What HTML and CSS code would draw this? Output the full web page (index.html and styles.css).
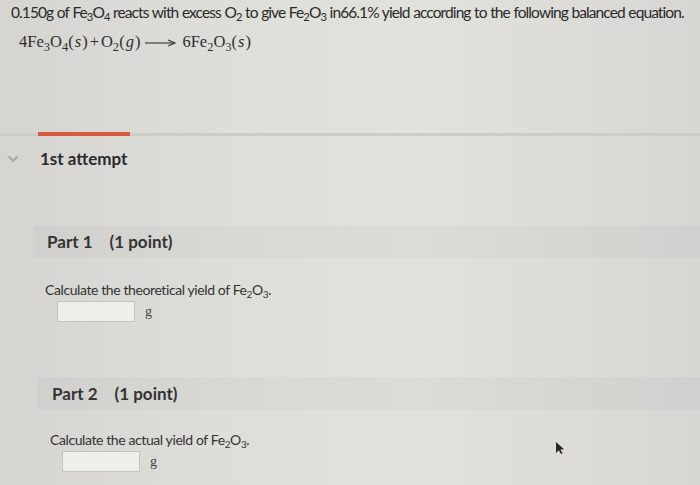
FILE: index.html
```html
<!DOCTYPE html>
<html lang="en">
<head>
  <meta charset="UTF-8" />
  <meta name="viewport" content="width=device-width, initial-scale=1.0" />
  <title>Theoretical yield</title>
  <link rel="stylesheet" href="styles.css">
</head>
<body>
  <div class="question">
    <p class="question-text">0.150g of Fe<sub>3</sub>O<sub>4</sub> reacts with excess O<sub>2</sub> to give Fe<sub>2</sub>O<sub>3</sub> in66.1% yield according to the following balanced equation.</p>
    <div class="equation">4Fe<sub>3</sub>O<sub>4</sub>(<i>s</i>)<span class="op">+</span>O<sub>2</sub>(<i>g</i>)<svg class="arrow" width="31" height="10" viewBox="0 0 31 10">
        <line x1="0" y1="5" x2="28" y2="5" stroke="#333" stroke-width="1.1" />
        <path d="M23 2 L30 5 L23 8" fill="none" stroke="#333" stroke-width="1.1" />
      </svg>6Fe<sub>2</sub>O<sub>3</sub>(<i>s</i>)</div>
  </div>

  <div class="progress">
    <div class="progress-fill"></div>
  </div>

  <div class="attempt-head">
    <svg class="chevron" width="12" height="8" viewBox="0 0 12 8">
      <path d="M1.5 1.5 L6 6 L10.5 1.5" fill="none" stroke="#a8a8a6" stroke-width="2.2" />
    </svg>
    <span>1st attempt</span>
  </div>

  <div class="part">
    <div class="part-head"><span class="part-name">Part 1</span>(1 point)</div>
    <div class="part-body">
      <p class="prompt">Calculate the theoretical yield of Fe<sub>2</sub>O<sub>3</sub>.</p>
      <div class="answer">
        <span class="answer-box"></span>
        <span class="unit">g</span>
      </div>
    </div>
  </div>

  <div class="part part-second">
    <div class="part-head"><span class="part-name">Part 2</span>(1 point)</div>
    <div class="part-body">
      <p class="prompt">Calculate the actual yield of Fe<sub>2</sub>O<sub>3</sub>.</p>
      <div class="answer">
        <span class="answer-box"></span>
        <span class="unit">g</span>
      </div>
    </div>
  </div>

  <!-- mouse pointer caught in the shot -->
  <svg class="pointer" width="10" height="14" viewBox="0 0 10 14">
    <path d="M1 1 L1 12 L3.8 9.2 L6 13 L7.6 12.2 L5.4 8.4 L9 8.2 Z" fill="#2b2524" />
  </svg>
</body>
</html>
```

FILE: styles.css
```css
body {
  margin: 0;
  min-height: 485px;
  font-family: Lato, "Open Sans", sans-serif;
  color: #2a2a2a;
  background: linear-gradient(to right, #d5d4d1 0%, #dfdfda 35%, #e2e2dc 60%, #d8d6d3 100%);
  position: relative;
  overflow: hidden;
}

sub {
  font-size: 0.72em;
  line-height: 0;
  vertical-align: -0.3em;
}

/* Question */
.question {
  padding: 1px 0 0 11px;
}

.question-text {
  margin: 0;
  font-size: 15.5px;
  line-height: 22px;
  letter-spacing: -0.9px;
  word-spacing: 0.5px;
  white-space: nowrap;
}

.equation {
  margin: 7px 0 0 8px;
  font-family: "Liberation Serif", serif;
  font-size: 16.5px;
  line-height: 24px;
  color: #2e2e2e;
}

.equation sub {
  font-size: 0.76em;
  vertical-align: -0.35em;
}

.equation i {
  font-style: italic;
  padding: 0 1px;
}

.equation .op {
  margin: 0 2px;
}

.equation .arrow {
  margin: 0 6px 0 5px;
  vertical-align: middle;
}

/* Attempt */
.progress {
  margin-top: 78px;
  height: 4px;
  background: linear-gradient(to bottom, transparent 1px, #cdccc8 1px);
}

.progress-fill {
  width: 92px;
  height: 4px;
  margin-left: 38px;
  background: #d65a3c;
}

.attempt-head {
  margin-top: 11px;
  display: flex;
  align-items: center;
  gap: 21px;
  padding-left: 7px;
  font-size: 17px;
  line-height: 24px;
  font-weight: bold;
  color: #2b2b2b;
}

/* Parts */
.part {
  margin: 55px 0 0 33px;
}

.part-head {
  height: 32px;
  line-height: 32px;
  padding-left: 14px;
  background: rgba(0, 0, 0, 0.025);
  font-size: 17px;
  font-weight: bold;
  color: #333;
}

.part-name {
  margin-right: 17px;
}

.part-body {
  padding-left: 12px;
}

.prompt {
  margin: 22px 0 0;
  font-size: 14px;
  line-height: 20px;
  letter-spacing: -0.4px;
  color: #333;
}

.answer {
  margin-top: 1px;
  padding-left: 12px;
  display: flex;
  align-items: center;
  gap: 10px;
}

.answer-box {
  width: 78px;
  height: 21px;
  box-sizing: border-box;
  border: 1px solid #c4c4c2;
  background: #eeeeeb;
}

.unit {
  font-family: "Liberation Serif", serif;
  font-size: 14px;
  color: #444;
}

.part-second {
  margin-left: 37px;
}

.part-second .part-head {
  height: 33px;
  line-height: 33px;
  padding-left: 15px;
}

.part-second .part-body {
  padding-left: 13px;
}

.part-second .prompt {
  margin-top: 20px;
}

.pointer {
  position: absolute;
  left: 555px;
  top: 441px;
}
```
